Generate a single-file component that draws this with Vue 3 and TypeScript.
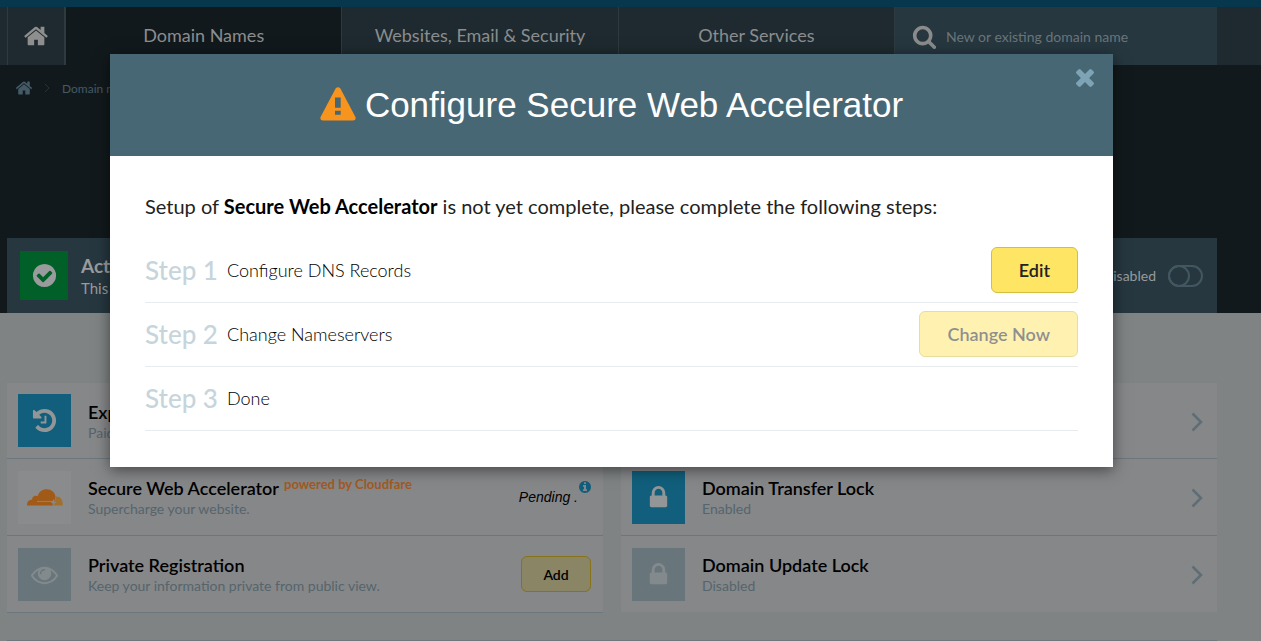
<script setup lang="ts">
import { ref } from 'vue'

interface Service {
  title: string
  note: string
  icon: string
  tone: 'blue' | 'muted' | 'plain'
  tag?: string
  action: 'none' | 'pending' | 'add' | 'open'
}

const icons: Record<string, string> = {
  home: 'M1472 992v480q0 26-19 45t-45 19h-384v-384h-256v384h-384q-26 0-45-19t-19-45v-480q0-1 .5-3t.5-3l575-474 575 474q1 2 1 6zm223-69l-62 74q-8 9-21 11h-3q-13 0-21-7l-692-577-692 577q-12 8-24 7-13-2-21-11l-62-74q-8-10-7-23.5t11-21.5l719-599q32-26 76-26t76 26l244 204v-195q0-14 9-23t23-9h192q14 0 23 9t9 23v408l219 182q10 8 11 21.5t-7 23.5z',
  search: 'M1216 832q0-185-131.5-316.5t-316.5-131.5-316.5 131.5-131.5 316.5 131.5 316.5 316.5 131.5 316.5-131.5 131.5-316.5zm512 832q0 52-38 90t-90 38q-54 0-90-38l-343-342q-179 124-399 124-143 0-273.5-55.5t-225-150-150-225-55.5-273.5 55.5-273.5 150-225 225-150 273.5-55.5 273.5 55.5 225 150 150 225 55.5 273.5q0 220-124 399l343 343q37 37 37 90z',
  close: 'M1490 1322q0 40-28 68l-136 136q-28 28-68 28t-68-28l-294-294-294 294q-28 28-68 28t-68-28l-136-136q-28-28-28-68t28-68l294-294-294-294q-28-28-28-68t28-68l136-136q28-28 68-28t68 28l294 294 294-294q28-28 68-28t68 28l136 136q28 28 28 68t-28 68l-294 294 294 294q28 28 28 68z',
  check: 'M1412 734q0-28-18-46l-91-90q-19-19-45-19t-45 19l-408 407-226-226q-19-19-45-19t-45 19l-91 90q-18 18-18 46 0 27 18 45l362 362q19 19 45 19 27 0 46-19l543-543q18-18 18-45zm252 162q0 209-103 385.5t-279.5 279.5-385.5 103-385.5-103-279.5-279.5-103-385.5 103-385.5 279.5-279.5 385.5-103 385.5 103 279.5 279.5 103 385.5z',
  history: 'M1664 896q0 156-61 298t-164 245-245 164-298 61q-172 0-327-72.5t-264-204.5q-7-10-6.5-22.5t8.5-20.5l137-138q10-9 25-9 16 2 23 12 73 95 179 147t225 52q104 0 198.5-40.5t163.5-109.5 109.5-163.5 40.5-198.5-40.5-198.5-109.5-163.5-163.5-109.5-198.5-40.5q-98 0-188 35.5t-160 101.5l137 138q31 30 14 69-17 40-59 40h-448q-26 0-45-19t-19-45v-448q0-42 40-59 39-17 69 14l130 129q107-101 244.5-156.5t284.5-55.5q156 0 298 61t245 164 164 245 61 298zm-640-288v448q0 14-9 23t-23 9h-320q-14 0-23-9t-9-23v-64q0-14 9-23t23-9h224v-352q0-14 9-23t23-9h64q14 0 23 9t9 23z',
  lock: 'M640 768h512v-192q0-106-75-181t-181-75-181 75-75 181v192zm832 96v576q0 40-28 68t-68 28h-960q-40 0-68-28t-28-68v-576q0-40 28-68t68-28h32v-192q0-184 132-316t316-132 316 132 132 316v192h32q40 0 68 28t28 68z',
  eye: 'M1664 960q-152-236-381-353 61 104 61 225 0 185-131.5 316.5t-316.5 131.5-316.5-131.5-131.5-316.5q0-121 61-225-229 117-381 353 133 205 333.5 326.5t434.5 121.5 434.5-121.5 333.5-326.5zm-720-384q0-20-14-34t-34-14q-125 0-214.5 89.5t-89.5 214.5q0 20 14 34t34 14 34-14 14-34q0-86 61-147t147-61q20 0 34-14t14-34zm848 384q0 34-20 69-140 230-376.5 368.5t-499.5 138.5-499.5-139-376.5-368q-20-35-20-69t20-69q140-229 376.5-368t499.5-139 499.5 139 376.5 368q20 35 20 69z',
  info: 'M1152 1376v-160q0-14-9-23t-23-9h-96v-512q0-14-9-23t-23-9h-320q-14 0-23 9t-9 23v160q0 14 9 23t23 9h96v320h-96q-14 0-23 9t-9 23v160q0 14 9 23t23 9h448q14 0 23-9t9-23zm-128-896v-160q0-14-9-23t-23-9h-192q-14 0-23 9t-9 23v160q0 14 9 23t23 9h192q14 0 23-9t9-23zm640 416q0 209-103 385.5t-279.5 279.5-385.5 103-385.5-103-279.5-279.5-103-385.5 103-385.5 279.5-279.5 385.5-103 385.5 103 279.5 279.5 103 385.5z',
}

const columns: Service[][] = [
  [
    { title: 'Expiry', note: 'Paid', icon: 'history', tone: 'blue', action: 'none' },
    { title: 'Secure Web Accelerator', note: 'Supercharge your website.', icon: 'cloud', tone: 'plain', tag: 'powered by Cloudfare', action: 'pending' },
    { title: 'Private Registration', note: 'Keep your information private from public view.', icon: 'eye', tone: 'muted', action: 'add' },
  ],
  [
    { title: '', note: '', icon: 'lock', tone: 'blue', action: 'open' },
    { title: 'Domain Transfer Lock', note: 'Enabled', icon: 'lock', tone: 'blue', action: 'open' },
    { title: 'Domain Update Lock', note: 'Disabled', icon: 'lock', tone: 'muted', action: 'open' },
  ],
]

const steps = [
  { label: 'Step 1', text: 'Configure DNS Records', button: 'Edit', disabled: false },
  { label: 'Step 2', text: 'Change Nameservers', button: 'Change Now', disabled: true },
  { label: 'Step 3', text: 'Done', button: '', disabled: false },
]

const open = ref(true)
const autoRenew = ref(false)
const query = ref('')
</script>

<template>
  <div class="page">
    <header class="top">
      <nav class="nav" aria-label="Main">
        <a class="home" href="#" aria-label="Home">
          <svg viewBox="0 0 1792 1792"><path :d="icons.home" /></svg>
        </a>
        <a class="tab active" href="#">Domain Names</a>
        <a class="tab" href="#">Websites, Email &amp; Security</a>
        <a class="tab" href="#">Other Services</a>
        <label class="search">
          <svg viewBox="0 0 1792 1792"><path :d="icons.search" /></svg>
          <input v-model="query" type="text" placeholder="New or existing domain name" aria-label="New or existing domain name" />
        </label>
      </nav>
    </header>

    <section class="hero">
      <nav class="crumbs" aria-label="Breadcrumb">
        <a href="#" aria-label="Home"><svg class="crumb-home" viewBox="0 0 1792 1792"><path :d="icons.home" /></svg></a>
        <svg class="crumb-sep" viewBox="0 0 6 10"><path d="M1 1l4 4-4 4" /></svg>
        <a href="#">Domain names</a>
      </nav>
      <div class="status">
        <span class="status-icon"><svg viewBox="0 0 1792 1792"><path :d="icons.check" /></svg></span>
        <div class="status-text">
          <strong>Active</strong>
          <span>This domain</span>
        </div>
        <label class="renew">
          <span>Disabled</span>
          <input v-model="autoRenew" type="checkbox" />
        </label>
      </div>
    </section>

    <main class="services">
      <ul v-for="(column, c) in columns" :key="c" class="column">
        <li v-for="(item, i) in column" :key="i" class="row">
          <span class="tile" :class="item.tone">
            <svg v-if="item.icon === 'cloud'" class="cloud" viewBox="0 0 36 17">
              <path fill="#a15a18" d="M0 16.500C0 12.500 2 10.800 5.200 10.800C4.600 7.800 8.300 5.600 10.500 7.200C12 2.800 15.500.2 19.600.2C24.500.2 28 3.500 28.600 8L26 16.500Z" />
              <path fill="#a1702f" d="M26.800 16.500L29.200 7.600C33.500 7.600 36 11 35.700 16.500Z" />
              <path fill="none" stroke="#87898a" stroke-width=".9" d="M10 12.400H25.500" />
              <path fill="#87898a" d="M26.200 9.500L27.200 12.400L29.600 13.300L27 14.200L26 16.800L25.400 14.200L23.800 13L25.600 12.200Z" />
            </svg>
            <svg v-else :class="item.icon" viewBox="0 0 1792 1792"><path :d="icons[item.icon]" /></svg>
          </span>
          <div class="row-text">
            <h2>{{ item.title }}<small v-if="item.tag">{{ item.tag }}</small></h2>
            <p>{{ item.note }}</p>
          </div>
          <span v-if="item.action === 'pending'" class="pending">
            <em>Pending .</em>
            <svg viewBox="128 128 1536 1536"><path :d="icons.info" /></svg>
          </span>
          <button v-else-if="item.action === 'add'" class="add" type="button">Add</button>
          <svg v-else-if="item.action === 'open'" class="chevron" viewBox="0 0 12 20"><path d="M1.500 1.500l8.500 8.500-8.500 8.500" /></svg>
        </li>
      </ul>
    </main>
    <div class="more"></div>

    <div v-if="open" class="overlay">
      <section class="dialog" role="dialog" aria-modal="true" aria-labelledby="dialog-title">
        <header class="dialog-head">
          <svg class="warn" viewBox="0 0 36 34">
            <path fill="#f7941e" fill-rule="evenodd" d="M15.600 1.600Q18 -1.200 20.400 1.600L35.300 29.800Q36.600 33.300 33 33.600H3Q-.6 33.300.7 29.800ZM15 10.500V20.800H20.700V10.500ZM15 23.800V27.800H20.700V23.800Z" />
          </svg>
          <h1 id="dialog-title">Configure Secure Web Accelerator</h1>
          <button class="close" type="button" aria-label="Close" @click="open = false">
            <svg viewBox="302 366 1188 1188"><path :d="icons.close" /></svg>
          </button>
        </header>
        <div class="dialog-body">
          <p class="intro">Setup of <b>Secure Web Accelerator</b> is not yet complete, please complete the following steps:</p>
          <ol class="steps">
            <li v-for="step in steps" :key="step.label">
              <span class="step-label">{{ step.label }}</span>
              <span class="step-text">{{ step.text }}</span>
              <button v-if="step.button" class="step-button" type="button" :disabled="step.disabled">{{ step.button }}</button>
            </li>
          </ol>
        </div>
      </section>
    </div>
  </div>
</template>

<style>
body {
  margin: 0;
}
</style>

<style scoped>
.page {
  position: relative;
  height: 100vh;
  overflow: hidden;
  background: #7f8383;
  font-family: Lato, "Open Sans", sans-serif;
  color: #000;
}
.page * {
  box-sizing: border-box;
}
a {
  color: inherit;
  text-decoration: none;
}
svg {
  display: block;
  flex: none;
  fill: currentColor;
}
button {
  font-family: inherit;
  cursor: pointer;
}
.top {
  padding: 0 44px 0 7px;
  border-top: 7px solid #07374c;
  background: #1e2a2f;
}
.nav {
  display: grid;
  grid-template-columns: 59px 1fr 1fr 1fr 322px;
  height: 58px;
}
.home {
  display: flex;
  align-items: center;
  justify-content: center;
  border-left: 1px solid #2d3b41;
  border-right: 2px solid #2d3b41;
  color: #8e8e8e;
}
.home svg {
  width: 26px;
  height: 26px;
}
.tab {
  display: flex;
  align-items: center;
  justify-content: center;
  padding-bottom: 2px;
  border-right: 1px solid #2d3b41;
  font-size: 18px;
  color: #8b8d8e;
}
.tab.active {
  background: #12191c;
}
.search {
  display: flex;
  align-items: center;
  gap: 9px;
  padding: 0 17px;
  background: #26373f;
  color: #8b8b8b;
}
.search svg {
  width: 25px;
  height: 25px;
}
.search input {
  flex: 1;
  min-width: 0;
  padding: 0;
  border: 0;
  outline: 0;
  background: transparent;
  font-family: inherit;
  font-size: 14px;
  color: #8b8b8b;
}
.search input::placeholder {
  color: #6a757a;
  opacity: 1;
}
.hero {
  display: flex;
  flex-direction: column;
  justify-content: space-between;
  height: 248px;
  padding: 0 44px 0 7px;
  background: #12191c;
}
.crumbs {
  display: flex;
  align-items: center;
  height: 46px;
  padding-left: 8px;
  font-size: 12px;
  color: #445a66;
}
.crumb-home {
  width: 18px;
  height: 18px;
}
.crumb-sep {
  width: 6px;
  height: 10px;
  margin: 0 12px 0 11px;
  fill: none;
  stroke: #263238;
}
.status {
  display: flex;
  align-items: center;
  height: 75px;
  padding: 0 14px 0 13px;
  background: #26373f;
  color: #999b9c;
}
.status-icon {
  display: flex;
  align-items: center;
  justify-content: center;
  width: 48px;
  height: 49px;
  margin-right: 13px;
  background: #006027;
}
.status-icon svg {
  width: 27px;
  height: 27px;
}
.status-text {
  display: flex;
  flex: 1;
  flex-direction: column;
  padding-top: 2px;
  font-size: 15px;
  line-height: 22px;
}
.status-text strong {
  font-size: 19px;
}
.renew {
  display: flex;
  align-items: center;
  gap: 12px;
  font-size: 14px;
}
.renew input {
  width: 35px;
  height: 22px;
  margin: 0;
  border: 2px solid #435761;
  border-radius: 11px;
  appearance: none;
}
.renew input::before {
  content: "";
  display: block;
  width: 22px;
  height: 22px;
  margin: -2px;
  border: 2px solid #435761;
  border-radius: 50%;
  box-sizing: border-box;
}
.renew input:checked::before {
  margin-left: 11px;
}
.services {
  display: grid;
  grid-template-columns: 1fr 1fr;
  gap: 18px;
  padding: 70px 44px 0 7px;
}
.column {
  margin: 0;
  padding: 0;
  list-style: none;
}
.row {
  display: flex;
  align-items: center;
  height: 77px;
  padding: 0 12px 0 11px;
  border-bottom: 1px solid #6b777d;
  background: #868789;
}
.row:first-child {
  height: 76px;
}
.column:last-child .row:last-child {
  border-bottom-color: transparent;
  background-clip: padding-box;
}
.tile {
  display: flex;
  align-items: center;
  justify-content: center;
  width: 53px;
  height: 53px;
  margin-right: 17px;
  color: #929697;
}
.tile.blue {
  background: #115f7c;
}
.tile.muted {
  background: #68767c;
  color: #838a8d;
}
.tile.plain {
  background: #8a8b8c;
}
.tile svg {
  width: 27px;
  height: 27px;
}
.tile svg.cloud {
  width: 36px;
  height: 17px;
}
.row-text {
  flex: 1;
  padding-top: 2px;
}
.row-text h2 {
  display: flex;
  gap: 5px;
  height: 22px;
  margin: 0;
  font-size: 18px;
  font-weight: 600;
  line-height: 22px;
}
.row-text small {
  font-size: 13px;
  font-weight: 700;
  line-height: 14px;
  color: #a15a21;
}
.row-text p {
  height: 20px;
  margin: 0;
  font-size: 14px;
  line-height: 20px;
  color: #55656c;
}
.pending {
  display: flex;
  gap: 1px;
  height: 32px;
  font-family: "Liberation Sans", Arial, sans-serif;
  font-size: 14px;
  line-height: 32px;
}
.pending svg {
  width: 12px;
  height: 12px;
  color: #115f7c;
}
.add {
  width: 70px;
  height: 36px;
  padding: 0;
  border: 1px solid #86731a;
  border-radius: 6px;
  background: #8a8564;
  font-size: 14px;
  font-weight: 600;
  color: #000;
}
.chevron {
  width: 12px;
  height: 20px;
  margin: 2px 2px 0 0;
  fill: none;
  stroke: #5e6e76;
  stroke-width: 2.500;
}
.more {
  height: 40px;
  margin: 27px 44px 0 7px;
  border-top: 1px solid #6b777d;
  background: #868789;
}
.overlay {
  position: absolute;
  inset: 0;
  padding: 54px 148px 0 110px;
}
.dialog {
  background: #fff;
  box-shadow: 0 3px 14px rgba(0, 0, 0, 0.5);
}
.dialog-head {
  position: relative;
  display: flex;
  align-items: center;
  justify-content: center;
  gap: 9px;
  height: 102px;
  background: #486775;
}
.warn {
  width: 36px;
  height: 34px;
  margin-bottom: 2px;
}
.dialog-head h1 {
  margin: 0;
  font-family: "Liberation Sans", Arial, sans-serif;
  font-size: 35px;
  font-weight: 400;
  line-height: 44px;
  color: #fff;
}
.close {
  position: absolute;
  top: 15px;
  right: 19px;
  padding: 0;
  border: 0;
  background: none;
  color: #7ea3b5;
}
.close svg {
  width: 18px;
  height: 18px;
}
.dialog-body {
  padding: 36px 35px;
}
.intro {
  margin: 0 0 19px;
  font-size: 20px;
  line-height: 28px;
  color: #222;
}
.intro b {
  font-weight: 700;
  color: #000;
}
.steps {
  margin: 0;
  padding: 0;
  list-style: none;
}
.steps li {
  display: flex;
  align-items: center;
  height: 64px;
  padding-bottom: 2px;
  border-bottom: 1px solid #e8ebed;
}
.step-label {
  width: 82px;
  font-size: 26px;
  font-weight: 500;
  color: #c6d5dc;
}
.step-text {
  flex: 1;
  font-size: 18px;
  font-weight: 300;
}
.step-button {
  height: 46px;
  padding: 0 27px;
  border: 1px solid #d3bf3c;
  border-radius: 6px;
  background: #ffe564;
  font-size: 18px;
  font-weight: 600;
  color: #222;
}
.step-button:disabled {
  opacity: 0.5;
}
</style>
